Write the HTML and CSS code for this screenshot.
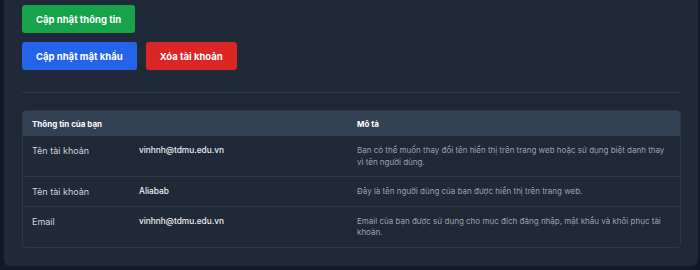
FILE: index.html
```html
<!DOCTYPE html>
<html>
<head>
	<meta charset="utf-8">
	<link rel="stylesheet" href="styles.css">
</head>
<body>
	<div class="card">
		<div class="actions">
			<div class="row">
				<button class="btn green">Cập nhật thông tin</button>
			</div>
			<div class="row">
				<button class="btn blue">Cập nhật mật khẩu</button>
				<button class="btn red">Xóa tài khoản</button>
			</div>
		</div>
		<div class="divider"></div>
		<div class="table-wrap">
			<table class="info">
				<thead>
					<tr>
						<th colspan="2">Thông tin của bạn</th>
						<th>Mô tả</th>
					</tr>
				</thead>
				<tbody>
					<tr>
						<td class="label">Tên tài khoản</td>
						<td class="value">vinhnh@tdmu.edu.vn</td>
						<td class="desc">Bạn có thể muốn thay đổi tên hiển thị trên trang web hoặc sử dụng biệt danh thay vì tên người dùng.</td>
					</tr>
					<tr>
						<td class="label">Tên tài khoản</td>
						<td class="value">Aliabab</td>
						<td class="desc">Đây là tên người dùng của bạn được hiển thị trên trang web.</td>
					</tr>
					<tr>
						<td class="label">Email</td>
						<td class="value">vinhnh@tdmu.edu.vn</td>
						<td class="desc">Email của bạn được sử dụng cho mục đích đăng nhập, mật khẩu và khôi phục tài khoản.</td>
					</tr>
				</tbody>
			</table>
		</div>
	</div>
</body>
</html>
```

FILE: styles.css
```css
html,body{
	margin: 0;
	padding: 0;
}
body{
	background: #111827;
	font-family: Inter, "Noto Sans", sans-serif;
	padding: 0 2px 5px 4px;
	height: 270px;
	box-sizing: border-box;
	overflow: hidden;
}
.card{
	background: #1f2937;
	border-radius: 0 0 6px 6px;
	padding: 5px 17px 18px 18px;
}
.actions{
	display: flex;
	flex-direction: column;
	gap: 9px;
}
.row{
	display: flex;
	gap: 9px;
}
.btn{
	font-family: inherit;
	font-size: 9.5px;
	font-weight: 700;
	color: #fff;
	border: none;
	border-radius: 3px;
	height: 28px;
	padding: 0 14px;
}
.green{ background: #16a34a; }
.blue{ background: #2563eb; }
.red{ background: #dc2626; }
.divider{
	height: 1px;
	background: #2c3747;
	margin: 22px 0 17px;
}
.table-wrap{
	border: 1px solid #2e3948;
	border-radius: 4px;
	overflow: hidden;
}
.info{
	width: 100%;
	border-collapse: collapse;
}
.info th{
	background: #334155;
	color: #fff;
	font-size: 8px;
	font-weight: 700;
	text-align: left;
	height: 25px;
	padding: 0 9px;
}
.info td{
	padding: 9px 9px 8px;
	vertical-align: top;
	line-height: 11.5px;
	border-top: 1px solid #2e3948;
}
.info tbody tr:first-child td{
	border-top: none;
}
.label{
	width: 89px;
	font-size: 9px;
	color: #d1d5db;
}
.value{
	width: 200px;
	font-size: 8.3px;
	color: #eef0f3;
	font-weight: 500;
}
.desc{
	font-size: 8px;
	color: #9ca3af;
}
```
